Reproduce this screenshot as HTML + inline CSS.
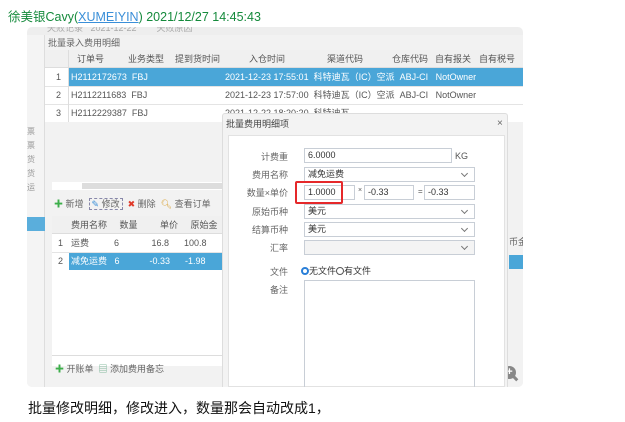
<!DOCTYPE html>
<html><head><meta charset="utf-8"><style>
*{margin:0;padding:0;box-sizing:border-box}
body{width:625px;height:422px;background:#fff;font-family:"Liberation Sans","Noto Sans CJK SC",sans-serif;position:relative;overflow:hidden}
.a{position:absolute}
.t{font-size:9px;color:#555;white-space:nowrap}
.cell{position:absolute;font-size:9px;white-space:nowrap;line-height:18px;color:#555}
.inp{position:absolute;background:#fff;border:1px solid #c8ced6;height:15px;font-size:9px;line-height:13px;padding-left:3px;color:#333}
.sel::after{content:"";position:absolute;right:7px;top:3px;width:4px;height:4px;border-right:1px solid #777;border-bottom:1px solid #777;transform:rotate(45deg)}
.lbl{position:absolute;width:60px;text-align:right;font-size:9px;color:#666;left:228px}
</style></head><body>
<div class="a" style="left:8px;top:6px;font-size:12.5px;color:#158a3c;white-space:nowrap">徐美银Cavy(<span style="color:#3a8fd8;text-decoration:underline">XUMEIYIN</span>) 2021/12/27 14:45:43</div>

<div class="a" style="left:27px;top:27px;width:496px;height:360px;background:#eeeeee;border-radius:5px;overflow:hidden">
 <div class="a t" style="left:20px;top:-6px;color:#aaa">失败记录 &nbsp; 2021-12-22 &nbsp;&nbsp;&nbsp;&nbsp;&nbsp;&nbsp; 失败原因</div>
 <div class="a" style="left:0;top:8px;width:18px;height:352px;background:#f4f4f4;border-right:1px solid #ddd"></div>
 <div class="a t" style="left:0;top:98px;color:#999;line-height:14px;font-size:8px">票<br>票<br>货<br>货<br>运</div>
 <div class="a" style="left:0;top:190px;width:18px;height:14px;background:#5aaedc"></div>
 <div class="a" style="left:18px;top:8px;width:478px;height:352px;background:#f2f2f2"></div>
 <div class="a t" style="left:21px;top:9px;color:#666">批量录入费用明细</div>
 <div class="a" style="left:18px;top:23px;width:478px;height:72px;background:#fff;border-top:1px solid #ddd"></div>
 <div class="a" style="left:18px;top:23px;width:478px;height:18px;background:#f0f0f0;border-bottom:1px solid #ddd"></div>
 <div class="a" style="left:41px;top:41px;width:455px;height:18px;background:#4aa6d8"></div>
 <div class="a" style="left:18px;top:59px;width:478px;height:1px;background:#e4e4e4"></div>
 <div class="a" style="left:18px;top:77px;width:478px;height:1px;background:#e4e4e4"></div>
 <div class="a" style="left:41px;top:23px;width:1px;height:72px;background:#ddd"></div>
 <div class="cell" style="left:50px;top:23px">订单号</div><div class="cell" style="left:101px;top:23px">业务类型</div><div class="cell" style="left:148px;top:23px">提到货时间</div><div class="cell" style="left:222px;top:23px">入仓时间</div><div class="cell" style="left:300px;top:23px">渠道代码</div><div class="cell" style="left:365px;top:23px">仓库代码</div><div class="cell" style="left:408px;top:23px">自有报关</div><div class="cell" style="left:452px;top:23px">自有税号</div>
 <div class="cell" style="left:29px;top:41px">1</div><div class="cell" style="left:44px;top:41px;color:#fff">H2112172673 &nbsp;FBJ</div><div class="cell" style="left:198px;top:41px;color:#fff">2021-12-23 17:55:01 &nbsp;科特迪瓦（IC）空派 &nbsp;ABJ-CI &nbsp;&nbsp;NotOwner</div>
 <div class="cell" style="left:29px;top:59px">2</div><div class="cell" style="left:44px;top:59px">H2112211683 &nbsp;FBJ</div><div class="cell" style="left:198px;top:59px">2021-12-23 17:57:00 &nbsp;科特迪瓦（IC）空派 &nbsp;ABJ-CI &nbsp;&nbsp;NotOwner</div>
 <div class="cell" style="left:29px;top:77px">3</div><div class="cell" style="left:44px;top:77px">H2112229387 &nbsp;FBJ</div><div class="cell" style="left:198px;top:77px">2021-12-22 18:20:20 &nbsp;科特迪瓦</div>
 <div class="a" style="left:25px;top:155px;width:195px;height:8px;background:#fff"></div>
 <div class="a" style="left:55px;top:156px;width:165px;height:6px;background:#ddd"></div>
 <div class="a t" style="left:27px;top:170px;color:#666"><span style="color:#3cae4a">✚</span> 新增 &nbsp;<span style="border:1px dashed #88a;padding:0 2px"><span style="color:#3a8fd8">✎</span> 修改</span> &nbsp;<span style="color:#e03a2a">✖</span> 删除 &nbsp;<span style="color:#d9a030">🔍︎</span> 查看订单</div>
 <div class="a" style="left:25px;top:189px;width:195px;height:150px;background:#fff"></div>
 <div class="a" style="left:25px;top:189px;width:195px;height:18px;background:#f0f0f0;border-bottom:1px solid #ddd"></div>
 <div class="a" style="left:42px;top:225px;width:178px;height:18px;background:#4aa6d8"></div>
 <div class="a" style="left:25px;top:225px;width:195px;height:1px;background:#e4e4e4"></div>
 <div class="cell" style="left:44px;top:189px">费用名称 &nbsp;&nbsp;&nbsp;&nbsp;数量 &nbsp;&nbsp;&nbsp;&nbsp;&nbsp;&nbsp;&nbsp;&nbsp;单价 &nbsp;&nbsp;&nbsp;&nbsp;原始金</div>
 <div class="cell" style="left:31px;top:207px">1</div><div class="cell" style="left:44px;top:207px">运费 &nbsp;&nbsp;&nbsp;&nbsp;&nbsp;&nbsp;&nbsp;&nbsp;&nbsp;6 &nbsp;&nbsp;&nbsp;&nbsp;&nbsp;&nbsp;&nbsp;&nbsp;&nbsp;&nbsp;&nbsp;&nbsp;16.8 &nbsp;&nbsp;&nbsp;&nbsp;&nbsp;100.8</div>
 <div class="cell" style="left:31px;top:225px">2</div><div class="cell" style="left:44px;top:225px;color:#fff">减免运费 &nbsp;&nbsp;6 &nbsp;&nbsp;&nbsp;&nbsp;&nbsp;&nbsp;&nbsp;&nbsp;&nbsp;&nbsp;&nbsp;-0.33 &nbsp;&nbsp;&nbsp;&nbsp;&nbsp;-1.98</div>
 <div class="a" style="left:25px;top:328px;width:195px;height:1px;background:#ddd"></div>
 <div class="a t" style="left:28px;top:335px;color:#666"><span style="color:#3cae4a">✚</span> 开账单 &nbsp;<span style="color:#6a8">▤</span> 添加费用备忘</div>
 <div class="a t" style="left:482px;top:208px;color:#666">币金</div>
 <div class="a" style="left:482px;top:228px;width:14px;height:14px;background:#4aa6d8"></div>
 <div class="a" style="left:476px;top:339px;width:13px;height:13px;border-radius:50%;background:#888;color:#fff;font-size:11px;line-height:13px;text-align:center;font-weight:bold">+</div>
 <div class="a" style="left:486px;top:350px;width:5px;height:3px;background:#888;transform:rotate(45deg)"></div>
</div>

<div class="a" style="left:222px;top:113px;width:286px;height:274px;background:#f3f3f3;border:1px solid #ddd;border-bottom:none;border-radius:3px 3px 0 0"></div>
<div class="a t" style="left:226px;top:117px;color:#444">批量费用明细项</div>
<div class="a" style="left:497px;top:118px;font-size:10px;color:#666">×</div>
<div class="a" style="left:228px;top:135px;width:277px;height:252px;background:#fff;border:1px solid #e2e2e2"></div>
<div class="lbl" style="top:150px">计费重</div>
<div class="inp" style="left:304px;top:148px;width:148px">6.0000</div><div class="a t" style="left:455px;top:151px">KG</div>
<div class="lbl" style="top:168px">费用名称</div>
<div class="inp sel" style="left:304px;top:167px;width:171px">减免运费</div>
<div class="lbl" style="top:186px">数量×单价</div>
<div class="inp" style="left:304px;top:185px;width:51px">1.0000</div>
<div class="a t" style="left:358px;top:187px;font-size:7px">×</div>
<div class="inp" style="left:364px;top:185px;width:50px">-0.33</div>
<div class="a t" style="left:418px;top:187px;font-size:8px">=</div>
<div class="inp" style="left:424px;top:185px;width:51px">-0.33</div>
<div class="a" style="left:295px;top:181px;width:48px;height:23px;border:2px solid #e5282a;border-radius:2px"></div>
<div class="lbl" style="top:205px">原始币种</div>
<div class="inp sel" style="left:304px;top:204px;width:171px">美元</div>
<div class="lbl" style="top:223px">结算币种</div>
<div class="inp sel" style="left:304px;top:222px;width:171px">美元</div>
<div class="lbl" style="top:241px">汇率</div>
<div class="inp sel" style="left:304px;top:240px;width:171px;background:#f4f4f4"></div>
<div class="lbl" style="top:265px">文件</div>
<div class="a t" style="left:301px;top:264px;color:#333"><span style="display:inline-block;width:8px;height:8px;border-radius:50%;border:2px solid #2a7fd8;vertical-align:-1px"></span>无文件<span style="display:inline-block;width:8px;height:8px;border-radius:50%;border:1px solid #555;vertical-align:-1px"></span>有文件</div>
<div class="lbl" style="top:283px">备注</div>
<div class="a" style="left:304px;top:280px;width:171px;height:107px;border:1px solid #c8ced6;border-bottom:none"></div>

<div class="a" style="left:28px;top:398px;font-size:14px;color:#111;white-space:nowrap">批量修改明细，修改进入，数量那会自动改成1，</div>
</body></html>
